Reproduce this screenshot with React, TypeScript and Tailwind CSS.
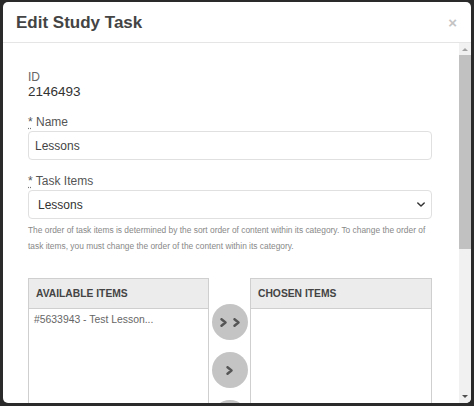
import React from 'react';

const font = { fontFamily: '"Liberation Sans", Arial, sans-serif' };

function Required() {
  return (
    <abbr title="required" className="underline decoration-dotted decoration-[#777] underline-offset-2">
      *
    </abbr>
  );
}

function Chevron({ className = '' }: { className?: string }) {
  return (
    <svg viewBox="0 0 7 9" className={className} fill="none">
      <polyline points="1.5,1.2 5.5,4.5 1.5,7.8" stroke="#555" strokeWidth="2.4" strokeLinecap="round" strokeLinejoin="round" />
    </svg>
  );
}

function ListBox({ title, items }: { title: string; items: string[] }) {
  return (
    <div className="h-[200px] border border-[#cfcfcf]">
      <div className="flex h-[30px] items-center border-b border-[#cfcfcf] bg-[#ececec] px-[7px] text-[10.3px] font-bold text-[#444]">
        {title}
      </div>
      <ul className="px-[5px] pt-[4px] text-[10.4px] leading-[14px] text-[#666]">
        {items.map((it) => (
          <li key={it}>{it}</li>
        ))}
      </ul>
    </div>
  );
}

function MoveButton({ double }: { double?: boolean }) {
  return (
    <button className="flex h-[36px] w-[36px] items-center justify-center gap-[6px] rounded-full bg-[#c4c4c4]">
      <Chevron className="h-[9px] w-[7px]" />
      {double && <Chevron className="h-[9px] w-[7px]" />}
    </button>
  );
}

export default function App() {
  return (
    <div style={font} className="h-[406px] w-[474px] overflow-hidden bg-[#2a2a2a] pt-[2px] pr-[3px] pl-[3px]">
      <div className="flex h-[401px] flex-col overflow-hidden rounded-[5px] bg-white">
        <div className="flex h-[41px] shrink-0 items-center justify-between border-b border-[#e5e5e5] pt-[1px] pr-[14px] pl-[13px]">
          <h2 className="text-[17px] font-bold text-[#444]">Edit Study Task</h2>
          <span className="text-[15px] font-bold leading-none text-[#c4c4c4]">×</span>
        </div>

        <div className="flex min-h-0 flex-1">
          <div className="min-w-0 flex-1 overflow-hidden pt-[27px] pr-[27px] pl-[25px]">
            <div className="text-[12px] leading-[14px] text-[#666]">ID</div>
            <div className="text-[13.5px] leading-[16px] text-[#333]">2146493</div>

            <label className="mt-[15px] block text-[12px] leading-[14px] text-[#555]">
              <Required /> Name
            </label>
            <div className="mt-[2px] flex h-[29px] items-center rounded-[4px] border border-[#e0e0e0] px-[6px] text-[12px] text-[#444]">
              Lessons
            </div>

            <label className="mt-[14px] block text-[12px] leading-[14px] text-[#555]">
              <Required /> Task Items
            </label>
            <div className="mt-[2px] flex h-[29px] items-center justify-between rounded-[4px] border border-[#e0e0e0] pr-[6px] pl-[9px] text-[12px] text-[#333]">
              <span>Lessons</span>
              <svg viewBox="0 0 10 6" className="h-[5px] w-[8px]" fill="none">
                <polyline points="1,1 5,5 9,1" stroke="#333" strokeWidth="1.8" strokeLinecap="round" strokeLinejoin="round" />
              </svg>
            </div>
            <p className="mt-[3px] text-[8.4px] leading-[16px] text-[#888]">
              The order of task items is determined by the sort order of content within its category. To change the order of
              task items, you must change the order of the content within its category.
            </p>

            <div className="mt-[24px] grid grid-cols-[181px_41px_1fr]">
              <ListBox title="AVAILABLE ITEMS" items={['#5633943 - Test Lesson...']} />
              <div className="flex flex-col items-center gap-[12px] pt-[26px]">
                <MoveButton double />
                <MoveButton />
                <MoveButton />
              </div>
              <ListBox title="CHOSEN ITEMS" items={[]} />
            </div>
          </div>

          <div className="flex w-[12px] shrink-0 flex-col items-center bg-[#f1f1f1]">
            <div className="flex h-[12px] items-center justify-center">
              <div className="h-0 w-0 border-r-[3px] border-b-[3px] border-l-[3px] border-r-transparent border-b-[#a3a3a3] border-l-transparent" />
            </div>
            <div className="h-[194px] w-[12px] bg-[#c1c1c1]" />
            <div className="flex-1" />
            <div className="flex h-[14px] items-center justify-center">
              <div className="h-0 w-0 border-t-[3px] border-r-[3px] border-l-[3px] border-t-[#505050] border-r-transparent border-l-transparent" />
            </div>
          </div>
        </div>
      </div>
    </div>
  );
}
